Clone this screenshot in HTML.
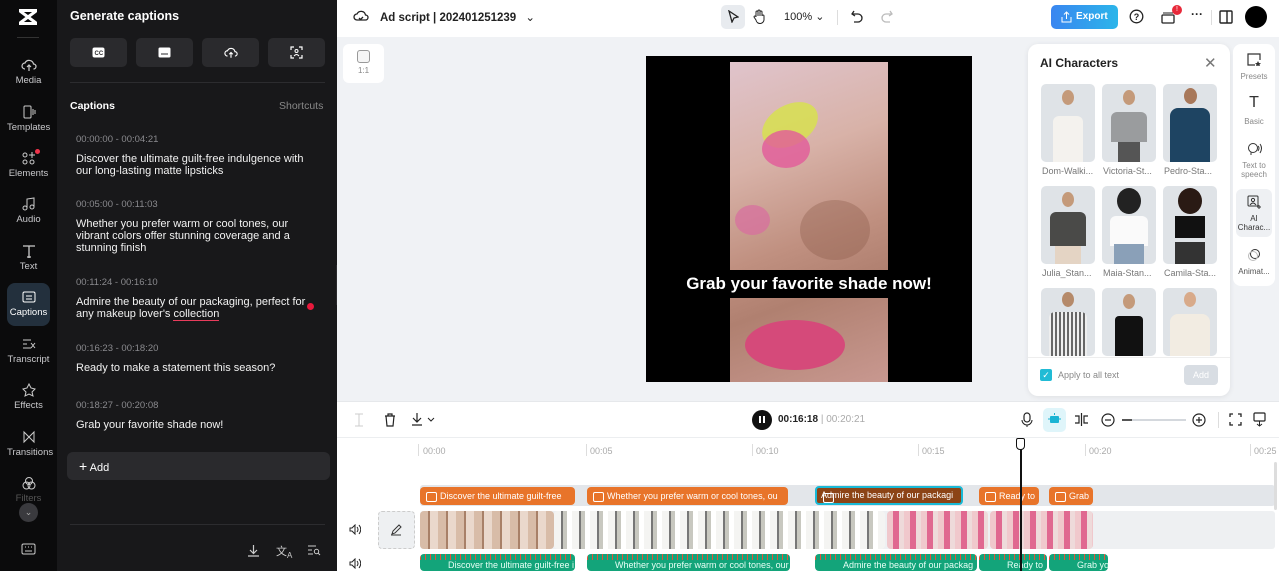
<!DOCTYPE html>
<html><head><meta charset="utf-8"><style>
*{box-sizing:border-box;margin:0;padding:0}
body{width:1279px;height:571px;overflow:hidden;font-family:"Liberation Sans",sans-serif;background:#fff;position:relative}
.abs{position:absolute}
.rail{left:0;top:0;width:57px;height:571px;background:#0b0b0c}
.ri{position:absolute;left:7px;width:43px;text-align:center;color:#c9c9cc;font-size:9.5px}
.ri svg{display:block;margin:0 auto 3px}
.panel{left:57px;top:0;width:280px;height:571px;background:#18181a;color:#fff}
.btn4{position:absolute;top:38px;width:57px;height:29px;background:#2a2a2d;border-radius:5px}
.cap{position:absolute;left:76px;width:245px;font-size:11px;line-height:12px;color:#f2f2f2}
.cap .t{color:#8a8a8e;font-size:9.5px;margin-bottom:7px}
.top{left:337px;top:0;width:942px;height:37px;background:#fff}
.canvas{left:337px;top:37px;width:942px;height:364px;background:#f0f2f5}
.chip{position:absolute;top:487px;height:18px;background:#e8742a;border-radius:4px;color:#fff;font-size:9px;line-height:18px;padding-left:20px;white-space:nowrap;overflow:hidden}
.chip:before{content:"";position:absolute;left:6px;top:5px;width:9px;height:8px;border:1px solid #fff;border-radius:2px}
.aud{position:absolute;top:554px;height:17px;background:#13a47a;border-radius:4px;color:#e6fff5;font-size:9px;line-height:22px;padding-left:28px;white-space:nowrap;overflow:hidden;background-image:repeating-linear-gradient(90deg,#e0523a 0 1px,transparent 1px 5px);background-size:100% 6px;background-repeat:no-repeat;background-color:#13a47a}
.ph{position:absolute;width:54px;height:78px;border-radius:5px;background:#dfe3e7;overflow:hidden}
.nm{position:absolute;font-size:9px;color:#777;width:60px}
</style></head><body>

<div class="abs rail">
  <svg class="abs" style="left:17px;top:8px" width="22" height="18" viewBox="0 0 22 18"><path d="M2 2.5h18M2 15.5h18M3 3l16 12M19 3L3 15" stroke="#fff" stroke-width="3" fill="none"/></svg>
  <div class="abs" style="left:17px;top:37px;width:22px;height:1px;background:#333"></div>
  <div class="ri" style="top:58px"><svg width="16" height="14" viewBox="0 0 16 14"><path d="M4 11a3 3 0 0 1 0-6a4.5 4.5 0 0 1 8.5 1a2.5 2.5 0 0 1 0 5M8 13V7M6 9l2-2 2 2" stroke="#ccc" fill="none" stroke-width="1.2"/></svg>Media</div>
  <div class="ri" style="top:105px"><svg width="16" height="14"><rect x="3" y="1" width="7" height="12" rx="1" stroke="#ccc" fill="none"/><path d="M12 4v6M14 5v4" stroke="#ccc"/></svg>Templates</div>
  <div class="ri" style="top:151px"><svg width="16" height="14"><circle cx="4" cy="4" r="2" stroke="#ccc" fill="none"/><path d="M11 1v6M8 4h6" stroke="#ccc"/><circle cx="4" cy="11" r="2" stroke="#ccc" fill="none"/><circle cx="11" cy="11" r="2" stroke="#ccc" fill="none"/></svg>Elements</div>
  <div class="abs" style="left:35px;top:149px;width:5px;height:5px;border-radius:50%;background:#f0334a"></div>
  <div class="ri" style="top:197px"><svg width="16" height="14"><path d="M6 11V2l7-1v9" stroke="#ccc" fill="none"/><circle cx="4" cy="11" r="2" stroke="#ccc" fill="none"/><circle cx="11" cy="10" r="2" stroke="#ccc" fill="none"/></svg>Audio</div>
  <div class="ri" style="top:244px"><svg width="16" height="14"><path d="M2 2h12M8 2v12M6 13h4" stroke="#ccc" stroke-width="1.3"/></svg>Text</div>
  <div class="abs" style="left:7px;top:283px;width:43px;height:43px;border-radius:8px;background:#23303d"></div>
  <div class="ri" style="top:290px;color:#fff"><svg width="16" height="14"><rect x="2" y="2" width="12" height="10" rx="1.5" stroke="#fff" fill="none"/><path d="M5 6h6M5 9h6" stroke="#fff"/></svg>Captions</div>
  <div class="ri" style="top:337px"><svg width="16" height="14"><path d="M2 3h8M2 7h4M2 11h8M10 6l4 5M14 6l-4 5" stroke="#ccc"/></svg>Transcript</div>
  <div class="ri" style="top:383px"><svg width="16" height="14"><path d="M8 1l2 4 4 1-3 3 1 4-4-2-4 2 1-4-3-3 4-1z" stroke="#ccc" fill="none"/></svg>Effects</div>
  <div class="ri" style="top:430px"><svg width="16" height="14"><path d="M3 2v10l10-10v10z" stroke="#ccc" fill="none"/></svg>Transitions</div>
  <div class="ri" style="top:476px;color:#555"><svg width="16" height="14"><circle cx="8" cy="5" r="3.5" stroke="#ccc" fill="none"/><circle cx="5.5" cy="9.5" r="3.5" stroke="#ccc" fill="none"/><circle cx="10.5" cy="9.5" r="3.5" stroke="#ccc" fill="none"/></svg>Filters</div>
  <div class="abs" style="left:19px;top:503px;width:19px;height:19px;border-radius:50%;background:#3a3a3e;color:#aaa;font-size:9px;text-align:center;line-height:19px">⌄</div>
  <svg class="abs" style="left:21px;top:543px" width="15" height="12"><rect x="1" y="1" width="13" height="10" rx="1.5" stroke="#ccc" fill="none"/><path d="M4 4h1M7 4h1M10 4h1M4 8h7" stroke="#ccc"/></svg>
</div>

<div class="abs panel">
  <div class="abs" style="left:13px;top:9px;font-size:12.5px;font-weight:bold">Generate captions</div>
  <div class="btn4" style="left:13px"><svg style="margin:9px 22px" width="13" height="11"><rect x="0.5" y="0.5" width="12" height="10" rx="2" fill="#fff"/><text x="2.5" y="8" font-size="6" font-family="Liberation Sans" font-weight="bold" fill="#2a2a2d">CC</text></svg></div>
  <div class="btn4" style="left:79px"><svg style="margin:9px 22px" width="13" height="11"><rect x="0.5" y="0.5" width="12" height="10" rx="1.5" fill="#fff"/><path d="M3 7h7" stroke="#2a2a2d"/></svg></div>
  <div class="btn4" style="left:145px"><svg style="margin:8px 22px" width="14" height="13" viewBox="0 0 16 14"><path d="M4 11a3 3 0 0 1 0-6a4.5 4.5 0 0 1 8.5 1a2.5 2.5 0 0 1 0 5M8 13V7M6 9l2-2 2 2" stroke="#fff" fill="none" stroke-width="1.3"/></svg></div>
  <div class="btn4" style="left:211px"><svg style="margin:8px 22px" width="13" height="13"><path d="M1 4V1h3M9 1h3v3M12 9v3H9M4 12H1V9" stroke="#fff" fill="none" stroke-width="1.2"/><circle cx="6.5" cy="5" r="1.5" stroke="#fff" fill="none"/><path d="M4 10q2.5-3 5 0" stroke="#fff" fill="none"/></svg></div>
  <div class="abs" style="left:13px;top:82px;width:255px;height:1px;background:#2c2c2f"></div>
  <div class="abs" style="left:13px;top:100px;font-size:10.5px;font-weight:bold">Captions</div>
  <div class="abs" style="left:222px;top:100px;font-size:10.5px;color:#888">Shortcuts</div>
</div>
<div class="cap" style="top:134px"><div class="t">00:00:00 - 00:04:21</div>Discover the ultimate guilt-free indulgence with our long-lasting matte lipsticks</div>
<div class="cap" style="top:199px"><div class="t">00:05:00 - 00:11:03</div>Whether you prefer warm or cool tones, our vibrant colors offer stunning coverage and a stunning finish</div>
<div class="cap" style="top:277px"><div class="t">00:11:24 - 00:16:10</div>Admire the beauty of our packaging, perfect for any makeup lover's <span style="border-bottom:1.5px solid #e83c5c">collection</span></div>
<div class="abs" style="left:307px;top:303px;width:7px;height:7px;border-radius:50%;background:#e8193c"></div>
<div class="cap" style="top:343px"><div class="t">00:16:23 - 00:18:20</div>Ready to make a statement this season?</div>
<div class="cap" style="top:400px"><div class="t">00:18:27 - 00:20:08</div>Grab your favorite shade now!</div>
<div class="abs" style="left:67px;top:452px;width:263px;height:28px;background:#2a2a2d;border-radius:6px;color:#fff;font-size:11px;line-height:28px;padding-left:12px"><span style="font-size:14px">+</span> Add</div>
<div class="abs" style="left:70px;top:524px;width:255px;height:1px;background:#2c2c2f"></div>
<svg class="abs" style="left:247px;top:544px" width="13" height="13"><path d="M6.5 1v8M3 6l3.5 3.5L10 6M1 12h11" stroke="#ccc" fill="none" stroke-width="1.2"/></svg>
<div class="abs" style="left:276px;top:543px;color:#ccc;font-size:11px">文<sub style="font-size:8px">A</sub></div>
<svg class="abs" style="left:307px;top:545px" width="14" height="11"><path d="M1 1h8M1 5h4M1 9h5" stroke="#ccc"/><circle cx="9.5" cy="6.5" r="2.2" stroke="#ccc" fill="none"/><path d="M11 8l2 2" stroke="#ccc"/></svg>
<div class="abs" style="left:336px;top:265px;width:7px;height:40px;background:#2a2a2d;border-radius:0 4px 4px 0"></div>

<div class="abs top">
  <svg class="abs" style="left:16px;top:9px" width="16" height="14" viewBox="0 0 16 14"><path d="M4 11a3 3 0 0 1 0-6a4.5 4.5 0 0 1 8.5 1a2.5 2.5 0 0 1 0 5zM6 9l1.5 1.5L10 8" stroke="#222" fill="none" stroke-width="1.3"/></svg>
  <div class="abs" style="left:43px;top:10px;font-size:11.5px;font-weight:bold;color:#222">Ad script | 202401251239 <span style="font-weight:normal;margin-left:6px">⌄</span></div>
  <div class="abs" style="left:384px;top:5px;width:24px;height:24px;border-radius:5px;background:#e8ebef"></div>
  <svg class="abs" style="left:390px;top:10px" width="12" height="13"><path d="M2 1l9 6-4 1-2 4z" stroke="#222" fill="none" stroke-width="1.3"/></svg>
  <svg class="abs" style="left:415px;top:9px" width="14" height="15"><path d="M4 8V3a1 1 0 0 1 2 0v4V2a1 1 0 0 1 2 0v5V3a1 1 0 0 1 2 0v4a1 1 0 0 1 2 0v3a4 4 0 0 1-8 1L2 8a1 1 0 0 1 2 0z" stroke="#222" fill="none"/></svg>
  <div class="abs" style="left:447px;top:10px;font-size:11px;color:#222">100% ⌄</div>
  <div class="abs" style="left:500px;top:10px;width:1px;height:15px;background:#ddd"></div>
  <svg class="abs" style="left:514px;top:10px" width="13" height="13"><path d="M3 1L1 4l3 2M1 4h6a4 4 0 0 1 0 8H3" stroke="#222" fill="none" stroke-width="1.3"/></svg>
  <svg class="abs" style="left:543px;top:10px" width="13" height="13"><path d="M10 1l2 3-3 2M12 4H6a4 4 0 0 0 0 8h4" stroke="#bbb" fill="none" stroke-width="1.3"/></svg>
  <div class="abs" style="left:714px;top:5px;width:67px;height:24px;border-radius:5px;background:linear-gradient(90deg,#3a86f0,#2bb5ea);color:#fff;font-size:10px;font-weight:bold;line-height:24px;padding-left:25px">Export</div>
  <svg class="abs" style="left:724px;top:11px" width="11" height="12"><path d="M5.5 8V1M3 3.5l2.5-2.5L8 3.5M1 6v5h9V6" stroke="#fff" fill="none"/></svg>
  <svg class="abs" style="left:792px;top:9px" width="15" height="15"><circle cx="7.5" cy="7.5" r="6.3" stroke="#222" fill="none" stroke-width="1.3"/><text x="4.7" y="11" font-size="9" font-weight="bold" font-family="Liberation Sans" fill="#222">?</text></svg>
  <svg class="abs" style="left:824px;top:10px" width="14" height="14"><rect x="1" y="5" width="12" height="8" rx="1" stroke="#222" fill="none" stroke-width="1.3"/><path d="M2 3h10" stroke="#222"/></svg>
  <div class="abs" style="left:835px;top:5px;width:10px;height:10px;border-radius:50%;background:#e8293a;color:#fff;font-size:7px;text-align:center;line-height:10px">!</div>
  <div class="abs" style="left:854px;top:7px;font-size:12px;color:#222;font-weight:bold">···</div>
  <div class="abs" style="left:874px;top:10px;width:1px;height:15px;background:#ddd"></div>
  <svg class="abs" style="left:882px;top:10px" width="14" height="14"><rect x="1" y="1" width="12" height="12" rx="1" stroke="#222" fill="none" stroke-width="1.4"/><path d="M8 1v12" stroke="#222" stroke-width="1.4"/></svg>
  <div class="abs" style="left:908px;top:6px;width:22px;height:22px;border-radius:50%;background:#000"></div>
</div>

<div class="abs canvas">
  <div class="abs" style="left:6px;top:7px;width:41px;height:39px;border-radius:6px;background:#fff;text-align:center;font-size:8px;color:#888"><div style="width:13px;height:13px;border:1px solid #999;border-radius:3px;margin:6px auto 3px;background:#f5f5f5"></div>1:1</div>
</div>
<div class="abs" style="left:646px;top:56px;width:326px;height:326px;background:#000"></div>
<div class="abs" style="left:730px;top:62px;width:158px;height:320px;background:linear-gradient(160deg,#e0c4cc 0%,#d8b2a8 30%,#c09080 55%,#b08070 70%,#c89890 100%)"></div>
<div class="abs" style="left:800px;top:200px;width:70px;height:60px;border-radius:50%;background:#8a5a48;opacity:.35"></div>
<div class="abs" style="left:760px;top:105px;width:60px;height:40px;border-radius:50%;background:#d7e34a;opacity:.8;transform:rotate(-30deg)"></div>
<div class="abs" style="left:762px;top:130px;width:48px;height:38px;border-radius:50%;background:#e25a9a;opacity:.8"></div>
<div class="abs" style="left:735px;top:205px;width:35px;height:30px;border-radius:50%;background:#d86ca0;opacity:.7"></div>
<div class="abs" style="left:745px;top:320px;width:100px;height:50px;border-radius:50%;background:#d54a7a"></div>
<div class="abs" style="left:730px;top:270px;width:158px;height:28px;background:#000"></div>
<div class="abs" style="left:646px;top:274px;width:326px;text-align:center;color:#fff;font-size:17px;font-weight:bold">Grab your favorite shade now!</div>

<div class="abs" style="left:1028px;top:44px;width:202px;height:352px;border-radius:10px;background:#fff;box-shadow:0 1px 6px rgba(0,0,0,.08)">
  <div class="abs" style="left:12px;top:12px;font-size:12px;font-weight:bold;color:#222">AI Characters</div>
  <div class="abs" style="left:176px;top:10px;font-size:15px;color:#777">✕</div>
  <div class="abs" style="left:0;top:313px;width:202px;height:1px;background:#eee"></div>
  <div class="abs" style="left:12px;top:325px;width:12px;height:12px;border-radius:2px;background:#21bbd5;color:#fff;font-size:9px;text-align:center;line-height:12px">✓</div>
  <div class="abs" style="left:30px;top:326px;font-size:9px;color:#888">Apply to all text</div>
  <div class="abs" style="left:156px;top:321px;width:34px;height:20px;border-radius:4px;background:#d8dde3;color:#fff;font-size:9px;text-align:center;line-height:20px">Add</div>
</div>
<div class="ph" style="left:1041px;top:84px"><div class="abs" style="left:12px;top:32px;width:30px;height:46px;background:#f4f2ee;border-radius:6px 6px 0 0"></div><div class="abs" style="left:21px;top:6px;width:12px;height:15px;border-radius:50%;background:#c49a7a"></div></div>
<div class="ph" style="left:1102px;top:84px"><div class="abs" style="left:9px;top:28px;width:36px;height:30px;background:#9a9c9e;border-radius:6px 6px 0 0"></div><div class="abs" style="left:16px;top:58px;width:22px;height:20px;background:#555"></div><div class="abs" style="left:21px;top:6px;width:12px;height:15px;border-radius:50%;background:#c49a7a"></div></div>
<div class="ph" style="left:1163px;top:84px"><div class="abs" style="left:7px;top:24px;width:40px;height:54px;background:#1e4462;border-radius:8px 8px 0 0"></div><div class="abs" style="left:21px;top:4px;width:13px;height:16px;border-radius:50%;background:#a8785a"></div></div>
<div class="nm" style="left:1042px;top:166px">Dom-Walki...</div><div class="nm" style="left:1103px;top:166px">Victoria-St...</div><div class="nm" style="left:1164px;top:166px">Pedro-Sta...</div>
<div class="ph" style="left:1041px;top:186px"><div class="abs" style="left:9px;top:26px;width:36px;height:34px;background:#4a4a48;border-radius:6px 6px 0 0"></div><div class="abs" style="left:14px;top:60px;width:26px;height:18px;background:#e4d4c4"></div><div class="abs" style="left:21px;top:6px;width:12px;height:15px;border-radius:50%;background:#c49a7a"></div></div>
<div class="ph" style="left:1102px;top:186px"><div class="abs" style="left:8px;top:30px;width:38px;height:30px;background:#fafafa;border-radius:6px 6px 0 0"></div><div class="abs" style="left:12px;top:58px;width:30px;height:20px;background:#8aa0b8"></div><div class="abs" style="left:15px;top:2px;width:24px;height:26px;border-radius:50%;background:#222"></div></div>
<div class="ph" style="left:1163px;top:186px"><div class="abs" style="left:12px;top:30px;width:30px;height:22px;background:#111"></div><div class="abs" style="left:12px;top:56px;width:30px;height:22px;background:#333"></div><div class="abs" style="left:15px;top:2px;width:24px;height:26px;border-radius:50%;background:#2a1a14"></div></div>
<div class="nm" style="left:1042px;top:268px">Julia_Stan...</div><div class="nm" style="left:1103px;top:268px">Maia-Stan...</div><div class="nm" style="left:1164px;top:268px">Camila-Sta...</div>
<div class="ph" style="left:1041px;top:288px;height:68px"><div class="abs" style="left:8px;top:24px;width:38px;height:44px;background:repeating-linear-gradient(90deg,#eee 0 2px,#666 2px 4px);border-radius:6px 6px 0 0"></div><div class="abs" style="left:21px;top:4px;width:12px;height:15px;border-radius:50%;background:#b58a6a"></div></div>
<div class="ph" style="left:1102px;top:288px;height:68px"><div class="abs" style="left:13px;top:28px;width:28px;height:40px;background:#111;border-radius:4px 4px 0 0"></div><div class="abs" style="left:21px;top:6px;width:12px;height:15px;border-radius:50%;background:#c49a7a"></div></div>
<div class="ph" style="left:1163px;top:288px;height:68px"><div class="abs" style="left:7px;top:26px;width:40px;height:42px;background:#f2ece2;border-radius:8px 8px 0 0"></div><div class="abs" style="left:21px;top:4px;width:12px;height:15px;border-radius:50%;background:#d8aa8a"></div></div>

<div class="abs" style="left:1233px;top:44px;width:42px;height:242px;border-radius:8px;background:#fff;font-size:8px;color:#888;text-align:center">
  <svg style="position:absolute;left:14px;top:9px" width="14" height="13"><path d="M8 12H1V1h12v6" stroke="#333" fill="none" stroke-width="1.2"/><path d="M11 8l1 2 2 .3-1.5 1.2.4 2-1.9-1-1.9 1 .4-2L8 10.3l2-.3z" fill="#333"/></svg>
  <div class="abs" style="left:0;top:28px;width:42px">Presets</div>
  <div class="abs" style="left:0;top:50px;width:42px;font-size:16px;color:#333">T</div>
  <div class="abs" style="left:0;top:73px;width:42px">Basic</div>
  <svg style="position:absolute;left:14px;top:98px" width="15" height="14"><circle cx="6" cy="6" r="4.5" stroke="#333" fill="none"/><path d="M4 10v3M11 4q2 2 0 5M13 2q3 4 0 9" stroke="#333" fill="none"/></svg>
  <div class="abs" style="left:0;top:117px;width:42px;line-height:9px">Text to speech</div>
  <div class="abs" style="left:3px;top:145px;width:36px;height:48px;border-radius:6px;background:#eef0f3"></div>
  <svg style="position:absolute;left:14px;top:151px" width="14" height="14"><rect x="1" y="1" width="10" height="10" rx="1" stroke="#333" fill="none"/><circle cx="6" cy="5" r="1.6" stroke="#333" fill="none"/><path d="M3 10q3-4 6 0M12 10v4M10 12h4" stroke="#333" fill="none"/></svg>
  <div class="abs" style="left:0;top:170px;width:42px;line-height:9px;color:#333">AI Charac...</div>
  <svg style="position:absolute;left:14px;top:204px" width="14" height="14"><circle cx="8" cy="6" r="4.5" stroke="#333" fill="none"/><circle cx="6" cy="8" r="4.5" stroke="#bbb" fill="none"/></svg>
  <div class="abs" style="left:0;top:223px;width:42px;color:#555">Animat...</div>
</div>

<div class="abs" style="left:337px;top:401px;width:942px;height:1px;background:#e6e8eb"></div>
<svg class="abs" style="left:354px;top:413px" width="10" height="14"><path d="M1 1h8M1 13h8M5 1v12" stroke="#ccc"/></svg>
<svg class="abs" style="left:384px;top:413px" width="12" height="14"><path d="M1 3h10M4 3V1h4v2M2 3l1 10h6l1-10" stroke="#222" fill="none" stroke-width="1.2"/></svg>
<svg class="abs" style="left:411px;top:412px" width="26" height="15"><path d="M6 1v9M2 6l4 4 4-4M1 13h10" stroke="#222" fill="none" stroke-width="1.2"/><path d="M17 6l3 3 3-3" stroke="#222" fill="none"/></svg>
<div class="abs" style="left:752px;top:410px;width:20px;height:20px;border-radius:50%;background:#111"></div>
<div class="abs" style="left:759px;top:416px;width:2px;height:7px;background:#fff;box-shadow:4px 0 0 #fff"></div>
<div class="abs" style="left:778px;top:414px;font-size:10px;font-weight:bold;color:#222">00:16:18 <span style="font-weight:normal;color:#aaa">| 00:20:21</span></div>
<svg class="abs" style="left:1021px;top:412px" width="12" height="16"><rect x="3" y="1" width="6" height="9" rx="3" stroke="#222" fill="none" stroke-width="1.2"/><path d="M1 8a5 5 0 0 0 10 0M6 13v2" stroke="#222" fill="none"/></svg>
<div class="abs" style="left:1043px;top:408px;width:23px;height:24px;border-radius:5px;background:#dff5fa"></div>
<svg class="abs" style="left:1048px;top:413px" width="13" height="13"><rect x="2" y="3" width="9" height="7" rx="1" fill="#1ab4d4"/><path d="M6.5 0v2M0 6h2M11 6h2" stroke="#1ab4d4"/></svg>
<svg class="abs" style="left:1074px;top:412px" width="15" height="15"><path d="M7.5 1v13M1 4h4v7H1M14 4h-4v7h4" stroke="#222" fill="none" stroke-width="1.2"/></svg>
<svg class="abs" style="left:1101px;top:413px" width="14" height="14"><circle cx="7" cy="7" r="6" stroke="#222" fill="none" stroke-width="1.2"/><path d="M4 7h6" stroke="#222" stroke-width="1.2"/></svg>
<div class="abs" style="left:1122px;top:419px;width:64px;height:2px;background:#d4d8dd"></div>
<div class="abs" style="left:1122px;top:419px;width:10px;height:2px;background:#555"></div>
<svg class="abs" style="left:1192px;top:413px" width="14" height="14"><circle cx="7" cy="7" r="6" stroke="#222" fill="none" stroke-width="1.2"/><path d="M4 7h6M7 4v6" stroke="#222" stroke-width="1.2"/></svg>
<div class="abs" style="left:1218px;top:412px;width:1px;height:16px;background:#ddd"></div>
<svg class="abs" style="left:1229px;top:413px" width="13" height="13"><path d="M1 4V1h3M9 1h3v3M12 9v3H9M4 12H1V9" stroke="#222" fill="none" stroke-width="1.3"/></svg>
<svg class="abs" style="left:1253px;top:412px" width="13" height="15"><rect x="1" y="1" width="11" height="8" rx="1" stroke="#222" fill="none" stroke-width="1.2"/><path d="M6.5 9v5M4 12l2.5 2 2.5-2" stroke="#222" fill="none"/></svg>
<div class="abs" style="left:337px;top:437px;width:942px;height:1px;background:#eceef0"></div>

<div class="abs" style="left:0;top:444px;width:1279px;font-size:9px;color:#aaa">
  <div class="abs" style="left:418px;top:0;width:1px;height:12px;background:#ddd"></div><div class="abs" style="left:423px;top:2px">00:00</div>
  <div class="abs" style="left:586px;top:0;width:1px;height:12px;background:#ddd"></div><div class="abs" style="left:590px;top:2px">00:05</div>
  <div class="abs" style="left:752px;top:0;width:1px;height:12px;background:#ddd"></div><div class="abs" style="left:756px;top:2px">00:10</div>
  <div class="abs" style="left:918px;top:0;width:1px;height:12px;background:#ddd"></div><div class="abs" style="left:922px;top:2px">00:15</div>
  <div class="abs" style="left:1085px;top:0;width:1px;height:12px;background:#ddd"></div><div class="abs" style="left:1089px;top:2px">00:20</div>
  <div class="abs" style="left:1250px;top:0;width:1px;height:12px;background:#ddd"></div><div class="abs" style="left:1254px;top:2px">00:25</div>
</div>
<div class="abs" style="left:420px;top:485px;width:855px;height:21px;background:#e3e6ea;border-radius:3px"></div>
<div class="chip" style="left:420px;width:155px">Discover the ultimate guilt-free</div>
<div class="chip" style="left:587px;width:201px">Whether you prefer warm or cool tones, ou</div>
<div class="chip" style="left:815px;width:148px;top:486px;height:19px;background:#8c4416;border:2px solid #19b9d6;padding-left:4px;line-height:14px">Admire the beauty of our packagi</div>
<div class="chip" style="left:979px;width:60px">Ready to</div>
<div class="chip" style="left:1049px;width:44px">Grab</div>
<div class="abs" style="left:420px;top:511px;width:855px;height:38px;background:#eef0f2;border-radius:3px"></div>
<div class="abs" style="left:420px;top:511px;width:134px;height:38px;border-radius:4px;background:repeating-linear-gradient(90deg,#d8bca8 0 8px,#a88068 8px 10px,#ead8cc 10px 18px)"></div>
<div class="abs" style="left:554px;top:511px;width:331px;height:38px;border-radius:4px;background:repeating-linear-gradient(90deg,#f4f4f2 0 7px,#777 7px 9px,#c8c8c0 9px 13px,#fff 13px 18px)"></div>
<div class="abs" style="left:887px;top:511px;width:101px;height:38px;border-radius:4px;background:repeating-linear-gradient(90deg,#f0c8cc 0 6px,#e06890 6px 12px,#eedada 12px 17px)"></div>
<div class="abs" style="left:990px;top:511px;width:103px;height:38px;border-radius:4px;background:repeating-linear-gradient(90deg,#f0c8cc 0 6px,#e06890 6px 12px,#eedada 12px 17px)"></div>
<div class="abs" style="left:378px;top:511px;width:37px;height:38px;border-radius:4px;background:#eef0f2;border:1px dashed #ccc"></div>
<svg class="abs" style="left:390px;top:524px" width="12" height="12"><path d="M2 10l1-3 6-6 2 2-6 6zM1 11h10" stroke="#333" fill="none"/></svg>
<svg class="abs" style="left:349px;top:524px" width="12" height="11"><path d="M1 4h2l3-3v9L3 7H1zM8 3q2 2.5 0 5M10 1q3.5 4.5 0 9" stroke="#222" fill="none"/></svg>
<svg class="abs" style="left:349px;top:558px" width="12" height="11"><path d="M1 4h2l3-3v9L3 7H1zM8 3q2 2.5 0 5M10 1q3.5 4.5 0 9" stroke="#222" fill="none"/></svg>
<div class="aud" style="left:420px;width:155px">Discover the ultimate guilt-free i</div>
<div class="aud" style="left:587px;width:203px">Whether you prefer warm or cool tones, our vib</div>
<div class="aud" style="left:815px;width:162px">Admire the beauty of our packag</div>
<div class="aud" style="left:979px;width:68px">Ready to</div>
<div class="aud" style="left:1049px;width:59px">Grab yo</div>
<div class="abs" style="left:1020px;top:440px;width:1.5px;height:131px;background:#111"></div>
<div class="abs" style="left:1016px;top:438px;width:9px;height:12px;border:1.5px solid #111;border-radius:2px 2px 4px 4px;background:#fff"></div>
<div class="abs" style="left:1274px;top:462px;width:3px;height:48px;background:#ddd;border-radius:2px"></div>
</body></html>
